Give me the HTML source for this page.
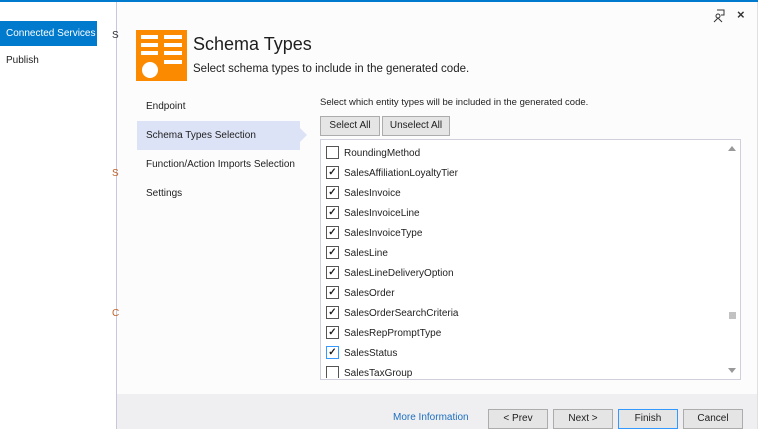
<!DOCTYPE html><html><head><style>
body{margin:0;width:762px;height:429px;overflow:hidden;background:#fff;font-family:"Liberation Sans",sans-serif;font-size:10px;color:#1e1e1e;position:relative}
.a{position:absolute}
.item{position:absolute;left:326px;height:20px;line-height:20px;white-space:nowrap}
.cb{display:inline-block;width:11px;height:11px;border:1px solid #555;background:#fff;vertical-align:middle;margin-right:5px;position:relative;top:-1px;text-align:center;line-height:11px;font-size:10px;font-weight:bold}
.btn{position:absolute;height:18px;border:1px solid #acacac;background:#e5e5e5;text-align:center;line-height:18px;font-size:10px}
</style></head><body>
<div class="a" style="left:0;top:0;width:758px;height:2px;background:#007acc"></div>
<div class="a" style="left:0;top:21px;width:97px;height:25px;background:#007acc;color:#fff;line-height:25px;padding-left:6px;box-sizing:border-box">Connected Services</div>
<div class="a" style="left:6px;top:55px">Publish</div>
<div class="a" style="left:116px;top:2px;width:1px;height:427px;background:#c8c8dc"></div>
<div class="a" style="left:117px;top:2px;width:640px;height:427px;background:#fcfcfc"></div>
<div class="a" style="left:757px;top:2px;width:1px;height:427px;background:#e0e0e0"></div>
<div class="a" style="left:117px;top:394px;width:640px;height:35px;background:#efeff2"></div>
<div class="a" style="left:112px;top:30px;font-size:10px;color:#333">S</div>
<div class="a" style="left:112px;top:168px;color:#c0632a">S</div>
<div class="a" style="left:112px;top:308px;color:#c0632a">C</div>
<svg class="a" style="left:712px;top:9px" width="14" height="14"><path d="M5 1h7v5h-3M2 13l4-4M10 13l-4-4M4 7a2 2 0 1 0 4 0a2 2 0 1 0-4 0" stroke="#333" fill="none" stroke-width="1"/></svg>
<div class="a" style="left:737px;top:7px;font-size:13px;font-weight:bold;color:#333">×</div>
<svg class="a" style="left:136px;top:30px" width="51" height="51"><rect width="51" height="51" fill="#fb8a00"/><g fill="#fff"><rect x="5" y="5" width="17" height="4"/><rect x="28" y="5" width="18" height="4"/><rect x="5" y="13" width="17" height="4"/><rect x="28" y="13" width="18" height="4"/><rect x="5" y="21" width="17" height="4"/><rect x="28" y="21" width="18" height="4"/><rect x="28" y="30" width="18" height="4"/><circle cx="14" cy="40" r="8"/></g></svg>
<div class="a" style="left:193px;top:34px;font-size:18px;color:#1e1e1e">Schema Types</div>
<div class="a" style="left:193px;top:63px;font-size:11.5px">Select schema types to include in the generated code.</div>
<div class="a" style="left:146px;top:101px">Endpoint</div>
<div class="a" style="left:137px;top:121px;width:163px;height:29px;background:#dde3f7"></div>
<div class="a" style="left:300px;top:128px;width:0;height:0;border-left:7px solid #dde3f7;border-top:7px solid transparent;border-bottom:7px solid transparent"></div>
<div class="a" style="left:146px;top:130px">Schema Types Selection</div>
<div class="a" style="left:146px;top:159px">Function/Action Imports Selection</div>
<div class="a" style="left:146px;top:188px">Settings</div>
<div class="a" style="left:320px;top:97px;font-size:9.5px">Select which entity types will be included in the generated code.</div>
<div class="btn" style="left:320px;top:116px;width:58px">Select All</div>
<div class="btn" style="left:382px;top:116px;width:66px">Unselect All</div>
<div class="a" style="left:320px;top:139px;width:419px;height:239px;border:1px solid #d0d0dc;background:#fff;overflow:hidden">
<div class="a" style="right:4px;top:6px;border-bottom:5px solid #999;border-left:4px solid transparent;border-right:4px solid transparent"></div>
<div class="a" style="right:4px;top:172px;width:7px;height:7px;background:#c2c2c2"></div>
<div class="a" style="right:4px;top:228px;border-top:5px solid #999;border-left:4px solid transparent;border-right:4px solid transparent"></div>
</div>
<div class="item" style="top:144px"><span class="cb"></span>RoundingMethod</div>
<div class="item" style="top:164px"><span class="cb">✓</span>SalesAffiliationLoyaltyTier</div>
<div class="item" style="top:184px"><span class="cb">✓</span>SalesInvoice</div>
<div class="item" style="top:204px"><span class="cb">✓</span>SalesInvoiceLine</div>
<div class="item" style="top:224px"><span class="cb">✓</span>SalesInvoiceType</div>
<div class="item" style="top:244px"><span class="cb">✓</span>SalesLine</div>
<div class="item" style="top:264px"><span class="cb">✓</span>SalesLineDeliveryOption</div>
<div class="item" style="top:284px"><span class="cb">✓</span>SalesOrder</div>
<div class="item" style="top:304px"><span class="cb">✓</span>SalesOrderSearchCriteria</div>
<div class="item" style="top:324px"><span class="cb">✓</span>SalesRepPromptType</div>
<div class="item" style="top:344px"><span class="cb" style="border-color:#3399ff">✓</span>SalesStatus</div>
<div class="item" style="top:364px;height:14px;overflow:hidden"><span class="cb"></span>SalesTaxGroup</div>
<div class="a" style="left:393px;top:412px;color:#1e6fbf">More Information</div>
<div class="btn" style="left:488px;top:409px;width:58px">&lt; Prev</div>
<div class="btn" style="left:553px;top:409px;width:58px">Next &gt;</div>
<div class="btn" style="left:618px;top:409px;width:58px;border-color:#3399ff">Finish</div>
<div class="btn" style="left:683px;top:409px;width:58px">Cancel</div>
</body></html>
